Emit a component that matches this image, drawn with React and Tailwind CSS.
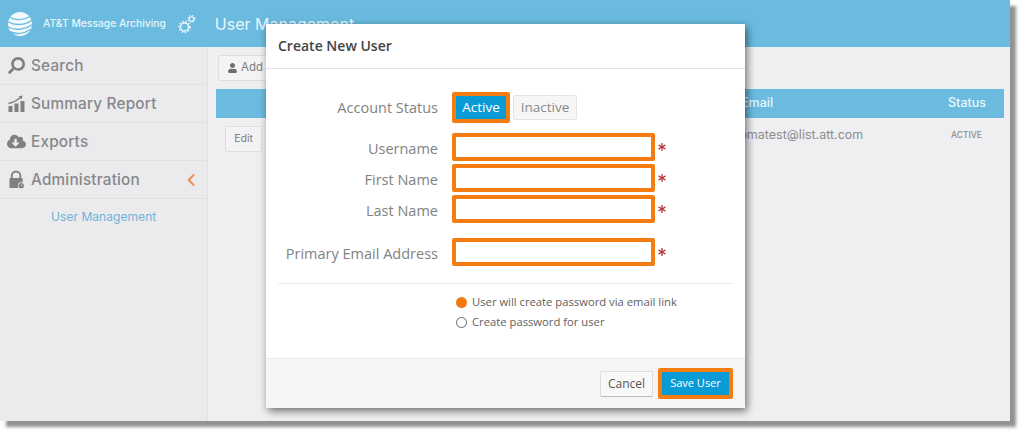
import React from 'react';
import { FaSearch, FaCloudDownloadAlt, FaChevronLeft, FaUser, FaAsterisk } from 'react-icons/fa';

const ReportIcon = () => (
  <svg width="17" height="17" viewBox="0 0 17 17" fill="currentColor">
    <rect x="0.5" y="11" width="4" height="6" />
    <rect x="6.5" y="8.5" width="4" height="8.5" />
    <rect x="12.5" y="6" width="4" height="11" />
    <path d="M0.5 8.5C5 7.5 9 5.5 12.5 2.5" fill="none" stroke="currentColor" strokeWidth="1.3" />
    <path d="M10.5 1.2l4-.7-.7 4z" />
  </svg>
);

const LockIcon = () => (
  <svg width="18" height="20" viewBox="0 0 18 20" fill="currentColor">
    <path d="M4 8V5.5a4.5 4.5 0 0 1 9 0V8" fill="none" stroke="currentColor" strokeWidth="2" />
    <rect x="1.5" y="8" width="14" height="10.5" rx="1" />
    <circle cx="14" cy="16" r="3.6" fill="#ebebee" />
    <circle cx="14" cy="16" r="2.8" />
    <path d="M14 14.6V16h1.2" fill="none" stroke="#ebebee" strokeWidth="0.7" />
  </svg>
);

const GearsIcon = () => (
  <svg width="18" height="20" viewBox="0 0 18 20" fill="none" stroke="#e8f5fb">
    <circle cx="6.5" cy="13" r="4" strokeWidth="1.5" />
    <circle cx="6.5" cy="13" r="5.4" strokeWidth="1.6" strokeDasharray="1.6 1.6" />
    <circle cx="13.5" cy="5" r="2.2" strokeWidth="1.1" />
    <circle cx="13.5" cy="5" r="3.4" strokeWidth="1.2" strokeDasharray="1.3 1.4" />
  </svg>
);

const menu = [
  { label: 'Search', icon: <FaSearch className="w-[17px] h-[17px] -scale-x-100" /> },
  { label: 'Summary Report', icon: <ReportIcon /> },
  { label: 'Exports', icon: <FaCloudDownloadAlt className="w-[19px] h-[19px] shrink-0" /> },
  { label: 'Administration', icon: <LockIcon />, arrow: true },
];

const AttLogo = () => (
  <svg width="26" height="26" viewBox="0 0 26 26" className="shrink-0">
    <circle cx="13" cy="13" r="12" fill="#f4f9fc" />
    <g fill="none" stroke="#6abbdf" strokeWidth="1.4" strokeLinecap="round">
      <path d="M3 6.5c5 3 14 3 20-1" />
      <path d="M1.5 11c6 3.5 16 3.5 23-1.5" />
      <path d="M1.5 16c6 3.5 16 3 23-2" />
      <path d="M4 21c5 2.5 13 2 19-2.5" />
    </g>
  </svg>
);

const SidebarRow = ({ item }) => (
  <div className="h-[38px] flex items-center pl-[8px] pr-[11px] border-b border-[#e1e1e4] text-[#87878a]">
    <span className="w-[17px] flex justify-center text-[#808082]">{item.icon}</span>
    <span className="ml-[6px] pt-[2px] text-[15.3px] font-medium tracking-[0.2px] font-['Inter',sans-serif]">{item.label}</span>
    {item.arrow && <FaChevronLeft className="ml-auto w-[10px] h-[14px] text-[#e8955a]" />}
  </div>
);

const Field = ({ label, className }) => (
  <div className={`flex items-center ${className}`}>
    <label className="w-[172px] pt-[4px] text-right text-[14.5px] text-[#828282]">{label}</label>
    <div className="ml-[14px] w-[203px] h-[28px] border-[4px] border-[#f57c10] rounded-[2px] bg-white" />
    <FaAsterisk className="ml-[3px] w-[8px] h-[8px] text-[#b5333a]" />
  </div>
);

export default function App() {
  return (
    <div className="relative w-[1024px] h-[436px] bg-white overflow-hidden font-['Open_Sans',sans-serif]">
      <div className="w-[1010px] h-[421px] flex flex-col bg-[#efeff2] shadow-[6px_6px_3px_rgba(110,110,110,0.75)]">
        <header className="h-[47px] shrink-0 bg-[#6abbdf] flex items-center pl-[7px] text-white">
          <AttLogo />
          <span className="ml-[10px] text-[10.3px] font-medium font-['Inter',sans-serif] text-[#e8f5fb]">AT&amp;T Message Archiving</span>
          <span className="ml-[12px]"><GearsIcon /></span>
          <span className="ml-[19px] text-[16px] font-['Inter',sans-serif] text-[#eaf6fb]">User Management</span>
        </header>

        <div className="flex flex-1 min-h-0">
          <aside className="w-[208px] shrink-0 bg-[#ebebee] border-r border-[#e1e1e4]">
            {menu.map(item => <SidebarRow key={item.label} item={item} />)}
            <div className="pt-[9px] pl-[51px] text-[12.1px] text-[#6fb3d6] font-['Inter',sans-serif]">User Management</div>
          </aside>

          <main className="flex-1 pt-[8px] pl-[8px] pr-[6px] font-['Inter',sans-serif]">
            <button className="h-[26px] ml-[2px] px-[9px] flex items-center gap-[4px] border border-[#dedee0] bg-[#f3f3f5] text-[11.5px] text-[#7d7d7f] rounded-[2px]">
              <FaUser className="w-[9px] h-[10px] text-[#6e6e70]" />Add User
            </button>
            <div className="mt-[8px] h-[29px] bg-[#6abbdf] flex items-center justify-between text-[12.5px] font-medium text-[#e9f6fb]">
              <span />
              <div className="flex items-center">
                <span className="w-[207px]">Email</span>
                <span className="w-[56px]">Status</span>
              </div>
            </div>
            <div className="mt-[8px] flex items-center justify-between text-[#8c8c8e]">
              <button className="ml-[9px] w-[37px] h-[26px] border border-[#dedee0] bg-[#f3f3f5] text-[10.5px] text-[#7d7d7f] rounded-[2px]">Edit</button>
              <div className="flex items-center mb-[7px]">
                <span className="w-[230px] text-[12.5px]">automatest@list.att.com</span>
                <span className="w-[53px] text-[8.5px] font-medium">ACTIVE</span>
              </div>
            </div>
          </main>
        </div>
      </div>

      {/* dialog over the page */}
      <div className="absolute left-[266px] top-[24px] w-[479px] h-[384px] flex flex-col bg-white shadow-[2px_3px_8px_rgba(0,0,0,0.55)]">
        <div className="h-[45px] shrink-0 flex items-center px-[12px] pb-[2px] border-b border-[#e2e2e2] text-[14px] font-semibold text-[#444]">Create New User</div>

        <div className="flex-1 px-[12px]">
          <div className="flex items-center mt-[23px] -ml-[12px]">
            <label className="w-[172px] text-right text-[14.5px] text-[#828282]">Account Status</label>
            <div className="ml-[14px] w-[58px] h-[31px] border-[4px] border-[#f57c10] rounded-[2px] bg-[#0a9bd6] text-white text-[13.5px] flex items-center justify-center">Active</div>
            <div className="ml-[3px] w-[64px] h-[25px] border border-[#e4e4e4] rounded-[2px] bg-[#f6f6f6] text-[#8a8a8a] text-[13.5px] flex items-center justify-center">Inactive</div>
          </div>
          <div className="-ml-[12px]">
            <Field label="Username" className="mt-[10px]" />
            <Field label="First Name" className="mt-[3px]" />
            <Field label="Last Name" className="mt-[3px]" />
            <Field label="Primary Email Address" className="mt-[15px]" />
          </div>

          <div className="mt-[17px] border-t border-[#ececec]" />

          <div className="mt-[9px] ml-[178px] text-[11.25px] text-[#5e5e5e]">
            <div className="h-[19.5px] flex items-center gap-[5px]">
              <span className="w-[11px] h-[11px] rounded-full bg-[#f07a10]" />
              User will create password via email link
            </div>
            <div className="h-[19.5px] flex items-center gap-[5px]">
              <span className="w-[11px] h-[11px] rounded-full border border-[#666] bg-white" />
              Create password for user
            </div>
          </div>
        </div>

        <div className="h-[50px] shrink-0 bg-[#f5f5f5] border-t border-[#ececec] flex items-center justify-end pr-[12px]">
          <button className="w-[53px] h-[26px] border border-[#ddd] border-b-[#bbb] rounded-[2px] bg-[#f8f8f8] text-[12px] text-[#555]">Cancel</button>
          <button className="ml-[5px] w-[75px] h-[31px] border-[4px] border-[#f57c10] rounded-[2px] bg-[#0a9bd6] text-white text-[11px]">Save User</button>
        </div>
      </div>
    </div>
  );
}
